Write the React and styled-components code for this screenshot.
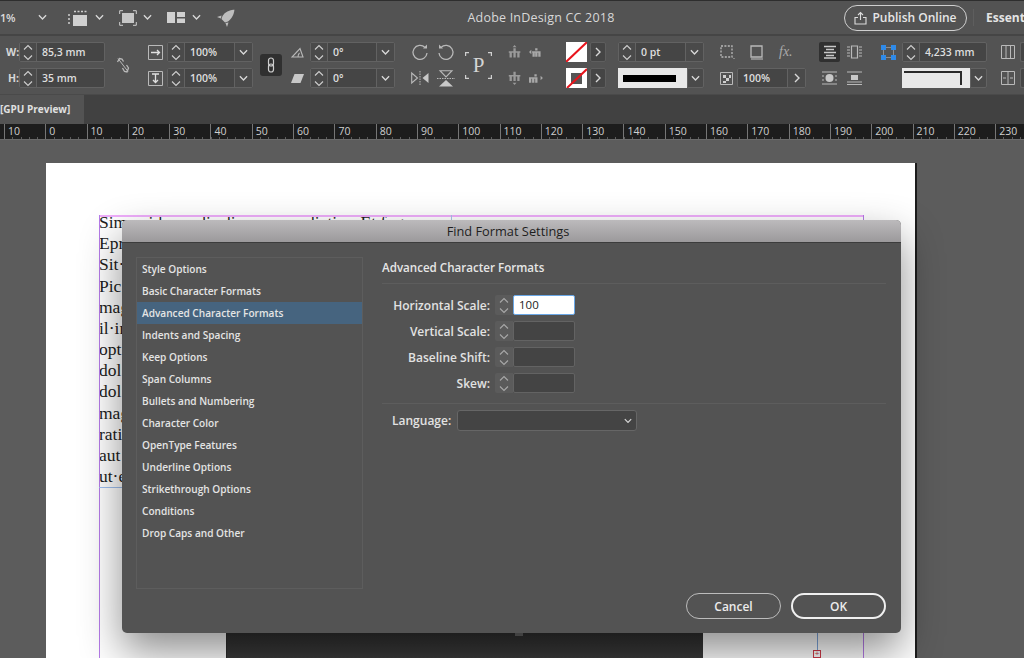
import React from "react";
import styled, { createGlobalStyle } from "styled-components";

const Global = createGlobalStyle`
  html, body { margin: 0; padding: 0; background: #5c5c5c; }
  body { font-family: "Open Sans", "Noto Sans", sans-serif; }
`;

const Screen = styled.div`
  width: 1024px;
  height: 658px;
  position: relative;
  overflow: hidden;
  display: flex;
  flex-direction: column;
  background: #5c5c5c;
`;

const TitleBar = styled.div`
  height: 33px;
  flex: none;
  display: flex;
  align-items: center;
  position: relative;
  background: #535353;
  border-top: 1px solid #2e2e2e;
  border-bottom: 2px solid #454545;
  color: #dcdcdc;
`;

const Zoom = styled.span`
  font-size: 11px;
  font-weight: 600;
  width: 14px;
  white-space: nowrap;
  letter-spacing: -0.3px;
`;

const TopIcon = styled.span`
  display: flex;
  margin-left: ${(p) => p.$ml}px;
`;

const AppTitle = styled.div`
  position: absolute;
  left: 0;
  right: 0;
  top: 8px;
  text-align: center;
  padding-left: 58px;
  font-size: 12.5px;
  letter-spacing: 0.2px;
  color: #d8d8d8;
`;

const Publish = styled.button`
  margin-left: auto;
  width: 123px;
  height: 26px;
  box-sizing: border-box;
  border: 1.5px solid #cfcfcf;
  border-radius: 13px;
  background: none;
  color: #e6e6e6;
  font: 600 12px "Open Sans", sans-serif;
  display: flex;
  align-items: center;
  justify-content: center;
  gap: 5px;
  padding: 0;
`;

const Workspace = styled.div`
  width: 38px;
  overflow: hidden;
  font-size: 12px;
  font-weight: 700;
  color: #e4e4e4;
  border-left: 1px solid #5e5e5e;
  padding-left: 12px;
  margin-left: 6px;
  white-space: nowrap;
`;

const ControlBar = styled.div`
  height: 59px;
  flex: none;
  box-sizing: border-box;
  padding-top: 6px;
  display: flex;
  background: #535353;
  border-bottom: 1px solid #4a4a4a;
  color: #d8d8d8;
`;

const Col = styled.div`
  margin-left: ${(p) => p.$ml}px;
  width: ${(p) => p.$w}px;
  flex: none;
  display: flex;
  flex-direction: column;
  gap: 6px;
`;

const Row = styled.div`
  height: 20px;
  display: flex;
  align-items: center;
  gap: ${(p) => p.$gap || 0}px;
  padding-left: ${(p) => p.$pl || 0}px;
`;

const Centered = styled.div`
  margin-left: ${(p) => p.$ml}px;
  width: ${(p) => p.$w}px;
  height: 46px;
  flex: none;
  display: flex;
  align-items: center;
  justify-content: center;
`;

const FieldLabel = styled.span`
  width: 13px;
  font-size: 10.5px;
  font-weight: 700;
  text-align: right;
`;

const Field = styled.div`
  flex: 1;
  height: 20px;
  min-width: 0;
  box-sizing: border-box;
  display: flex;
  align-items: stretch;
  border: 1px solid #626262;
  border-right-width: ${(p) => (p.$open ? 0 : 1)}px;
  border-radius: 2px;
  background: #454545;
  font-size: 10.5px;
  font-weight: 600;
  color: #dedede;
`;

const Stepper = styled.span`
  width: 16px;
  flex: none;
  display: flex;
  align-items: center;
  justify-content: center;
  border-right: 1px solid #626262;
  background: #4a4a4a;
`;

const Value = styled.span`
  flex: 1;
  padding-left: 5px;
  line-height: 18px;
  white-space: nowrap;
  overflow: hidden;
`;

const Drop = styled.span`
  width: 17px;
  flex: none;
  display: flex;
  align-items: center;
  justify-content: center;
  border-left: 1px solid #626262;
  background: #4a4a4a;
`;

const DropBox = styled.span`
  width: 17px;
  height: 20px;
  flex: none;
  box-sizing: border-box;
  display: flex;
  align-items: center;
  justify-content: center;
  background: #4a4a4a;
  border: 1px solid #626262;
  border-radius: 0 2px 2px 0;
`;

const ChainButton = styled.div`
  width: 22px;
  height: 22px;
  border-radius: 3px;
  background: #303030;
  display: flex;
  align-items: center;
  justify-content: center;
`;

const PBox = styled.div`
  width: 27px;
  height: 27px;
  position: relative;
  color: #d4d4d4;
  font: 21px/27px "Liberation Serif", serif;
  text-align: center;
`;

const Corners = styled.svg`
  position: absolute;
  left: 0;
  top: 0;
`;

const Swatch = styled.span`
  width: 21px;
  height: 20px;
  flex: none;
  background: #fff;
  display: flex;
`;

const ArrowBox = styled.span`
  width: 16px;
  height: 20px;
  flex: none;
  box-sizing: border-box;
  background: #454545;
  border: 1px solid #5e5e5e;
  border-radius: 2px;
  display: flex;
  align-items: center;
  justify-content: center;
`;

const StrokeBar = styled.span`
  flex: 1;
  height: 20px;
  background: #e8e8e8;
  display: flex;
  align-items: center;
  padding: 0 11px 0 5px;
  box-sizing: border-box;
`;

const StrokeFill = styled.span`
  flex: 1;
  height: 7px;
  background: #000;
`;

const ArrowStroke = styled.span`
  flex: 1;
  height: 20px;
  background: #e8e8e8;
  box-sizing: border-box;
  padding: 3px 8px 3px 2px;
  display: flex;
`;

const StrokeCorner = styled.span`
  flex: 1;
  border-top: 2px solid #2a2a2a;
  border-right: 2px solid #2a2a2a;
`;

const FxMark = styled.span`
  color: #aaa;
  font: italic 14px "Liberation Serif", serif;
`;

const IconCell = styled.span`
  width: 21px;
  height: 20px;
  flex: none;
  display: flex;
  align-items: center;
  justify-content: center;
  border-radius: 2px;
  background: ${(p) => (p.$on ? "#303030" : "transparent")};
`;

const TabStrip = styled.div`
  height: 29px;
  flex: none;
  display: flex;
  background: #414141;
`;

const Tab = styled.div`
  width: 84px;
  background: #535353;
  color: #e0e0e0;
  font-size: 10px;
  font-weight: 700;
  line-height: 29px;
  white-space: nowrap;
  overflow: hidden;
`;

const Ruler = styled.div`
  height: 16px;
  flex: none;
  box-sizing: border-box;
  display: flex;
  padding-left: 4px;
  background: repeating-linear-gradient(90deg, #5c5c5c 0 1px, transparent 1px 8.26px) 4px 100% / 100% 2px no-repeat #1d1d1d;
  border-bottom: 1px solid #6a6a6a;
  overflow: hidden;
`;

const RulerCell = styled.span`
  width: 41.3px;
  flex: none;
  box-sizing: border-box;
  border-left: 1px solid #767676;
  padding-left: 3px;
  color: #cfcfcf;
  font-size: 10.5px;
  line-height: 14px;
`;

const Canvas = styled.div`
  flex: 1;
  position: relative;
  background: #5c5c5c;
`;

const Page = styled.div`
  position: absolute;
  left: 46px;
  top: 23px;
  width: 869px;
  height: 500px;
  background: #fff;
  box-shadow: 2px 0 0 #1c1c1c;
`;

const FrameLine = styled.div`
  position: absolute;
  left: ${(p) => p.$x}px;
  top: ${(p) => p.$y}px;
  width: ${(p) => p.$w || 1}px;
  height: ${(p) => p.$h || 1}px;
  background: ${(p) => p.$c};
`;

const StoryText = styled.div`
  position: absolute;
  left: 99px;
  top: 72px;
  color: #1c1c1c;
  font: 17.5px/21.17px "Liberation Serif", serif;
  white-space: nowrap;
`;

const FooterFrame = styled.div`
  position: absolute;
  left: 226px;
  top: 493px;
  width: 476px;
  height: 30px;
  background: linear-gradient(#303030, #3d3d3d);
  border-left: 1px solid #2c2c2c;
`;

const Overset = styled.div`
  position: absolute;
  left: 813px;
  top: 510px;
  width: 8px;
  height: 8px;
  box-sizing: border-box;
  border: 1px solid #d13a4a;
  background: #fff;
  color: #d13a4a;
  font: 8px/6px "Liberation Sans", sans-serif;
  text-align: center;
`;

const Dialog = styled.div`
  position: absolute;
  left: 122px;
  top: 80px;
  width: 779px;
  height: 413px;
  border-radius: 5px;
  background: #535353;
  box-shadow: 0 18px 42px rgba(0, 0, 0, 0.45);
  display: flex;
  flex-direction: column;
  overflow: hidden;
`;

const DialogTitle = styled.div`
  height: 22px;
  flex: none;
  background: linear-gradient(#bcbabc, #9b999b);
  border-bottom: 1px solid #3c3c3c;
  color: #1e1e1e;
  text-align: center;
  font-size: 12.8px;
  line-height: 23px;
  padding-right: 7px;
`;

const DialogBody = styled.div`
  flex: 1;
  display: flex;
  padding: 14px 15px 0 14px;
  position: relative;
`;

const CategoryList = styled.ul`
  list-style: none;
  margin: 0;
  padding: 0;
  width: 227px;
  height: 332px;
  box-sizing: border-box;
  flex: none;
  border: 1px solid #5d5d5d;
`;

const CategoryItem = styled.li`
  height: 22px;
  padding-left: 5px;
  font-size: 10.1px;
  font-weight: 600;
  line-height: 23px;
  color: #e4e4e4;
  background: ${(p) => (p.$active ? "#46647f" : "transparent")};
`;

const Pane = styled.div`
  flex: 1;
  margin-left: 19px;
`;

const PaneTitle = styled.h2`
  margin: 0;
  height: 27px;
  box-sizing: border-box;
  padding-top: 3px;
  font-size: 11.6px;
  line-height: 16px;
  font-weight: 600;
  color: #e6e6e6;
  border-bottom: 1px solid #5d5d5d;
`;

const FormRows = styled.div`
  padding: 11px 0 10px;
  display: flex;
  flex-direction: column;
  gap: 6px;
  border-bottom: 1px solid #5d5d5d;
`;

const FormRow = styled.div`
  display: flex;
  align-items: center;
  height: 20px;
`;

const FormLabel = styled.label`
  width: 108px;
  text-align: right;
  font-size: 12px;
  font-weight: 600;
  color: #e2e2e2;
  white-space: nowrap;
`;

const FormStepper = styled.span`
  margin-left: 5px;
  width: 18px;
  height: 20px;
  display: flex;
  align-items: center;
  justify-content: center;
  background: #5b5b5b;
  border-radius: 2px 0 0 2px;
`;

const FormInput = styled.span`
  width: 62px;
  height: 20px;
  box-sizing: border-box;
  padding-left: 5px;
  border: 1px solid ${(p) => (p.$focus ? "#6aa7e6" : "#636363")};
  background: ${(p) => (p.$focus ? "#fff" : "#444")};
  color: #222;
  font-size: 11.5px;
  line-height: 18px;
  border-radius: 2px;
`;

const LanguageRow = styled.div`
  display: flex;
  align-items: center;
  margin-top: 6px;
  padding-left: 10px;
  gap: 6px;
`;

const LanguageLabel = styled.label`
  font-size: 12px;
  font-weight: 600;
  color: #e2e2e2;
`;

const Select = styled.div`
  width: 180px;
  height: 21px;
  box-sizing: border-box;
  background: #444;
  border: 1px solid #666;
  border-radius: 3px;
  display: flex;
  align-items: center;
  justify-content: flex-end;
  padding-right: 4px;
`;

const Actions = styled.div`
  position: absolute;
  right: 15px;
  bottom: 14px;
  display: flex;
  gap: 10px;
`;

const ActionButton = styled.button`
  width: 95px;
  height: 26px;
  padding: 0;
  border-radius: 13px;
  background: none;
  box-sizing: border-box;
  border: ${(p) => (p.$primary ? "2px solid #f0f0f0" : "1.5px solid #bcbcbc")};
  color: #ececec;
  font: 600 12px "Open Sans", sans-serif;
`;

const Chev = ({ size = 9, c = "#d8d8d8" }) => (
  <svg width={size} height={size * 0.7} viewBox="0 0 10 7" fill="none" stroke={c} strokeWidth="1.5">
    <path d="M1 1.5 5 5.5 9 1.5" />
  </svg>
);

const Next = () => (
  <svg width="6" height="10" viewBox="0 0 6 10" fill="none" stroke="#d8d8d8" strokeWidth="1.4">
    <path d="M1 1 5 5 1 9" />
  </svg>
);

const Updown = ({ c = "#cfcfcf" }) => (
  <svg width="10" height="17" viewBox="0 0 10 17" fill="none" stroke={c} strokeWidth="1.1">
    <path d="M1 5.5 5 1.5 9 5.5M1 11.5 5 15.5 9 11.5" />
  </svg>
);

const Ic = ({ w = 16, h = 16, children, ...rest }) => (
  <svg width={w} height={h} viewBox={`0 0 ${w} ${h}`} fill="none" stroke="#b9b9b9" {...rest}>
    {children}
  </svg>
);

const Spin = ({ children, drop }) => (
  <Field>
    <Stepper><Updown /></Stepper>
    <Value>{children}</Value>
    {drop && <Drop><Chev /></Drop>}
  </Field>
);

const rulerLabels = [10, 0, 10, 20, 30, 40, 50, 60, 70, 80, 90, 100, 110, 120, 130, 140, 150, 160, 170, 180, 190, 200, 210, 220, 230];

const categories = [
  "Style Options",
  "Basic Character Formats",
  "Advanced Character Formats",
  "Indents and Spacing",
  "Keep Options",
  "Span Columns",
  "Bullets and Numbering",
  "Character Color",
  "OpenType Features",
  "Underline Options",
  "Strikethrough Options",
  "Conditions",
  "Drop Caps and Other",
];

// the rest of each line sits behind the dialog
const storyLines = [
  "Simusrid quo dis diassm repudiatias. Et fuga",
  "Epr",
  "Sit·",
  "Pic",
  "mag",
  "il·in",
  "opt",
  "dol",
  "dol",
  "mag",
  "rati",
  "aut",
  "ut·e",
];

const formFields = [
  ["Horizontal Scale:", "100"],
  ["Vertical Scale:", ""],
  ["Baseline Shift:", ""],
  ["Skew:", ""],
];

function TopBar() {
  return (
    <TitleBar>
      <Zoom>1%</Zoom>
      <TopIcon $ml={24}><Chev /></TopIcon>
      <TopIcon $ml={21}>
        <Ic w={20} h={18}>
          <path d="M5 6h14v11H5z" fill="#d0d0d0" stroke="none" />
          <path d="M6 2.5h13M0 6h3M0 10h3M0 14h3" stroke="#d0d0d0" strokeWidth="1.4" strokeDasharray="2 1.5" />
        </Ic>
      </TopIcon>
      <TopIcon $ml={7}><Chev /></TopIcon>
      <TopIcon $ml={15}>
        <Ic w={18} h={16}>
          <path d="M3 3h12v10H3z" fill="#c6c6c6" stroke="none" />
          <path d="M.7 4V.7H4M14 .7h3.3V4M.7 12v3.3H4M14 15.3h3.3V12" stroke="#d0d0d0" />
        </Ic>
      </TopIcon>
      <TopIcon $ml={6}><Chev /></TopIcon>
      <TopIcon $ml={15}>
        <Ic w={18} h={13}>
          <path d="M0 1h8v11H0zM10 1h8v5h-8zM10 7.5h8V12h-8z" fill="#d0d0d0" stroke="none" />
        </Ic>
      </TopIcon>
      <TopIcon $ml={7}><Chev /></TopIcon>
      <TopIcon $ml={16}>
        <Ic w={18} h={18}>
          <path d="M17.5.5C12 1 8 3 5.5 7l-1 3 3.5 3.5 3-1c3.5-2.5 6-6.5 6.5-12.500zM4.500 6.500 0 8l4 1.500zM11.500 13.500 10 18l-1.500-4z" fill="#bdbdbd" stroke="none" />
        </Ic>
      </TopIcon>
      <AppTitle>Adobe InDesign CC 2018</AppTitle>
      <Publish>
        <Ic w={13} h={14} stroke="#dcdcdc">
          <path d="M4 6.5H1V13h11V6.5H9M6.5 9V1.5M4 4l2.5-2.5L9 4" strokeWidth="1.1" />
        </Ic>
        Publish Online
      </Publish>
      <Workspace>Essentials</Workspace>
    </TitleBar>
  );
}

function Controls() {
  return (
    <ControlBar>
      <Col $ml={6} $w={99}>
        <Row><FieldLabel>W:</FieldLabel><Spin>85,3 mm</Spin></Row>
        <Row><FieldLabel>H:</FieldLabel><Spin>35 mm</Spin></Row>
      </Col>
      <Centered $ml={10} $w={15}>
        <Ic w={14} h={16}>
          <path d="M2 1.5 12 14.5" strokeWidth="1" />
          <path d="M1.5 5 3.5 1.5 6 2 7.5 4.5M6.5 11 8.5 14.5 11 15 12.5 11 10.5 8" strokeWidth="1.3" />
        </Ic>
      </Centered>
      <Col $ml={18} $w={105}>
        <Row $gap={4}>
          <Ic w={15} h={15}><path d="M.5.5h14v14H.5z" /><path d="M3 7.5h8M9 5l2.5 2.5L9 10" stroke="#e0e0e0" strokeWidth="1.3" /></Ic>
          <Spin drop>100%</Spin>
        </Row>
        <Row $gap={4}>
          <Ic w={15} h={15}><path d="M.5.5h14v14H.5z" /><path d="M7.5 3v8M5 9l2.5 2.5L10 9M4 3h7" stroke="#e0e0e0" strokeWidth="1.3" /></Ic>
          <Spin drop>100%</Spin>
        </Row>
      </Col>
      <Centered $ml={7} $w={22}>
        <ChainButton>
          <Ic w={8} h={16} stroke="#cfcfcf"><rect x="1.5" y="1" width="5" height="8" rx="2.5" strokeWidth="1.2" /><rect x="1.5" y="7" width="5" height="8" rx="2.5" strokeWidth="1.2" /></Ic>
        </ChainButton>
      </Centered>
      <Col $ml={9} $w={104}>
        <Row $gap={6}>
          <Ic w={13} h={11}><path d="M1 10h11L9 1.5zM7 10c0-2 .5-3 1.5-4" strokeWidth="1.1" /></Ic>
          <Spin drop>0°</Spin>
        </Row>
        <Row $gap={6}>
          <Ic w={13} h={11}><path d="M3.5 1H13L9.5 10H0z" fill="#c8c8c8" stroke="none" /></Ic>
          <Spin drop>0°</Spin>
        </Row>
      </Col>
      <Col $ml={16} $w={44}>
        <Row $gap={8}>
          <Ic w={18} h={17}><path d="M14 3.5A7 7 0 1 0 16 9" strokeWidth="1.3" /><path d="M12 4.5h4V.5z" fill="#b9b9b9" stroke="none" /></Ic>
          <Ic w={18} h={17}><path d="M4 3.5A7 7 0 1 1 2 9" strokeWidth="1.3" /><path d="M6 4.5H2V.5z" fill="#b9b9b9" stroke="none" /></Ic>
        </Row>
        <Row $gap={8}>
          <Ic w={18} h={14}><path d="M.7 2v10L6.5 7z" strokeWidth="1.1" /><path d="M9 0v14" strokeWidth="1" strokeDasharray="1.5 1" /><path d="M17.5 2v10L11.5 7z" fill="#c8c8c8" stroke="none" /></Ic>
          <Ic w={18} h={17}><path d="M3 .7h12L9 7z" strokeWidth="1.1" /><path d="M0 8.5h18" strokeDasharray="1.5 1" /><path d="M2 16.5h14L9 10z" fill="#c8c8c8" stroke="none" /></Ic>
        </Row>
      </Col>
      <Centered $ml={10} $w={27}>
        <PBox>
          <Corners width="27" height="27" viewBox="0 0 27 27" fill="none" stroke="#d0d0d0" strokeWidth="1.2">
            <path d="M.6 4V.6H4M23 .6h3.4V4M.6 23v3.4H4M23 26.4h3.4V23" />
          </Corners>
          P
        </PBox>
      </Centered>
      <Col $ml={16} $w={35}>
        <Row $gap={8}>
          <Ic w={17} h={18}><path d="M8.5 0 11 3H6zM7 4h3v4H7zM1 8h15v2H1zM2 10h3v6H2zM7 10h3v6H7zM12 10h3v6h-3z" fill="#9a9a9a" stroke="none" /></Ic>
          <Ic w={18} h={14}><path d="M0 7l3-3v6zM8 2h3v3H8zM4 6h11v2H4zM4.5 8h3v5h-3zM8 8h3v5H8zM12 8h3v5h-3z" fill="#a8a8a8" stroke="none" /></Ic>
        </Row>
        <Row $gap={8}>
          <Ic w={17} h={18}><path d="M7 1h3v4H7zM1 5h15v2H1zM2 7h3v6H2zM7 7h3v6H7zM12 7h3v6h-3zM8.5 18 6 15h5z" fill="#9a9a9a" stroke="none" /></Ic>
          <Ic w={18} h={14}><path d="M7 2h3v3H7zM0 6h11v2H0zM0 8h3v5H0zM4 8h3v5H4zM8 8h3v5H8zM15 4l3 3-3 3z" fill="#a8a8a8" stroke="none" /></Ic>
        </Row>
      </Col>
      <Col $ml={23} $w={40}>
        <Row $gap={3}>
          <Swatch><svg width="21" height="20"><path d="M0 20 21 0" stroke="#e8141c" strokeWidth="2" /></svg></Swatch>
          <ArrowBox><Next /></ArrowBox>
        </Row>
        <Row $gap={3}>
          <Swatch><svg width="21" height="20"><path d="M5 5h11v11H5z" fill="#555" /><path d="M1 20 21 1" stroke="#e8141c" strokeWidth="2" /></svg></Swatch>
          <ArrowBox><Next /></ArrowBox>
        </Row>
      </Col>
      <Col $ml={12} $w={86}>
        <Row><Spin drop>0 pt</Spin></Row>
        <Row><StrokeBar><StrokeFill /></StrokeBar><DropBox><Chev /></DropBox></Row>
      </Col>
      <Col $ml={16} $w={86}>
        <Row $gap={15}>
          <Ic w={15} h={15}><path d="M1 1h11v11H1z" strokeDasharray="2 1.4" strokeWidth="1.3" /><path d="M13.5 13.5h1" /></Ic>
          <Ic w={14} h={15}><path d="M1 1h11v11H1z" strokeWidth="1.3" /><path d="M1 14h12" stroke="#8a8a8a" strokeWidth="2" /></Ic>
          <FxMark>fx.</FxMark>
        </Row>
        <Row $gap={4}>
          <Ic w={13} h={13}><path d="M.5.5h12v12H.5z" /><path d="M3 3h3v3H3zM6 6h3v3H6zM3 9h3v2H3zM9 3h2v3H9z" fill="#cfcfcf" stroke="none" /></Ic>
          <Field><Value>100%</Value><Drop><Next /></Drop></Field>
        </Row>
      </Col>
      <Col $ml={13} $w={46}>
        <Row $gap={4}>
          <IconCell $on><Ic w={14} h={14} stroke="#c8c8c8"><path d="M1 1.5h12M3 4.5h8M1 7.5h12M3 10.5h8M1 13h12" strokeWidth="1.3" /></Ic></IconCell>
          <IconCell><Ic w={15} h={14}><path d="M4.5 1h6v12h-6zM0 2h3M0 5h3M0 8h3M0 11h3M12 2h3M12 5h3M12 8h3M12 11h3" strokeWidth="1.2" /></Ic></IconCell>
        </Row>
        <Row $gap={4}>
          <IconCell><Ic w={15} h={14}><circle cx="7.5" cy="7" r="4" fill="#c8c8c8" stroke="none" /><path d="M0 1h15M0 13h15M0 5h2M13 5h2M0 9h2M13 9h2" strokeWidth="1.2" /></Ic></IconCell>
          <IconCell><Ic w={15} h={14}><path d="M4 4h7v5H4z" fill="#c8c8c8" stroke="none" /><path d="M0 1h15M0 11h15M0 13.5h15" strokeWidth="1.2" /></Ic></IconCell>
        </Row>
      </Col>
      <Col $ml={16} $w={106}>
        <Row $gap={6}>
          <Ic w={15} h={15}><path d="M2.5 2.5h10v10h-10z" strokeWidth=".8" stroke="#9a9a9a" /><path d="M0 0h5v5H0zM10 0h5v5h-5zM0 10h5v5H0zM10 10h5v5h-5z" fill="#2f8ae8" stroke="none" /></Ic>
          <Spin>4,233 mm</Spin>
        </Row>
        <Row $pl={21}>
          <ArrowStroke><StrokeCorner /></ArrowStroke>
          <DropBox><Chev /></DropBox>
        </Row>
      </Col>
      <Col $ml={14} $w={40}>
        <Row $gap={5}>
          <Ic w={14} h={14}><path d="M.5.5h13v13H.5zM5 .5v13M9.5.5v13" /></Ic>
          <Field $open />
        </Row>
        <Row $gap={5}>
          <Ic w={14} h={14}><path d="M.5.5h13v13H.5zM7 .5v13M2 7h3M9 7h3" /></Ic>
          <Field $open />
        </Row>
      </Col>
    </ControlBar>
  );
}

export default function App() {
  return (
    <Screen>
      <Global />
      <TopBar />
      <Controls />
      <TabStrip><Tab>[GPU Preview]</Tab></TabStrip>
      <Ruler>
        {rulerLabels.map((n, i) => (
          <RulerCell key={i}>{n}</RulerCell>
        ))}
      </Ruler>
      <Canvas>
        <Page />
        <StoryText>
          {storyLines.map((line, i) => (
            <div key={i}>{line}</div>
          ))}
        </StoryText>
        <FrameLine $x={99} $y={75} $w={764} $h={2} $c="#f0aefc" />
        <FrameLine $x={99} $y={75} $h={443} $c="#b57be8" />
        <FrameLine $x={863} $y={75} $h={443} $c="#b57be8" />
        <FrameLine $x={451} $y={75} $h={8} $c="#a9c4ea" />
        <FrameLine $x={99} $y={347} $w={30} $c="#9fc0ef" />
        <FrameLine $x={817} $y={493} $h={18} $c="#7fa7de" />
        <FooterFrame />
        <FrameLine $x={515} $y={493} $w={8} $h={3} $c="#666" />
        <Overset>+</Overset>
        <Dialog>
          <DialogTitle>Find Format Settings</DialogTitle>
          <DialogBody>
            <CategoryList>
              {categories.map((c, i) => (
                <CategoryItem key={c} $active={i === 2}>{c}</CategoryItem>
              ))}
            </CategoryList>
            <Pane>
              <PaneTitle>Advanced Character Formats</PaneTitle>
              <FormRows>
                {formFields.map(([label, val]) => (
                  <FormRow key={label}>
                    <FormLabel>{label}</FormLabel>
                    <FormStepper><Updown c="#a8a8a8" /></FormStepper>
                    <FormInput $focus={!!val}>{val}</FormInput>
                  </FormRow>
                ))}
              </FormRows>
              <LanguageRow>
                <LanguageLabel>Language:</LanguageLabel>
                <Select><Chev size={8} /></Select>
              </LanguageRow>
            </Pane>
            <Actions>
              <ActionButton>Cancel</ActionButton>
              <ActionButton $primary>OK</ActionButton>
            </Actions>
          </DialogBody>
        </Dialog>
      </Canvas>
    </Screen>
  );
}
